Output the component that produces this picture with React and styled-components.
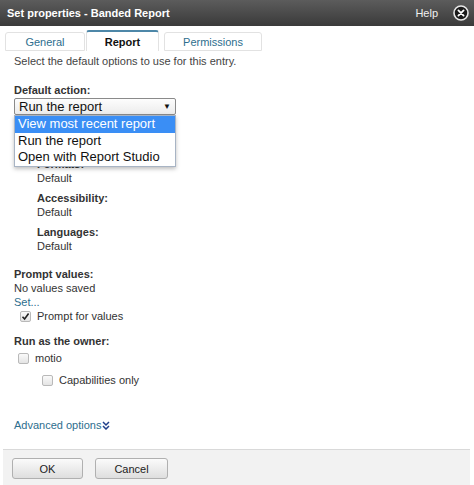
import React from "react";
import styled, { createGlobalStyle } from "styled-components";

const Global = createGlobalStyle`
  html, body { margin: 0; padding: 0; background: #fff; }
  body { font-family: "Liberation Sans", Arial, sans-serif; }
`;

const Dialog = styled.div`
  width: 474px;
  height: 485px;
  display: flex;
  flex-direction: column;
  overflow: hidden;
  background: #fff;
  position: relative;
`;

const TitleBar = styled.div`
  height: 26px;
  flex: none;
  display: flex;
  align-items: center;
  padding: 0 5px 0 7px;
  background: linear-gradient(#5c5c5c, #3a3a3a);
  color: #fff;
`;

const Title = styled.div`
  flex: 1;
  font-size: 11px;
  font-weight: bold;
`;

const Help = styled.span`
  font-size: 11px;
  margin-right: 15px;
  color: #f0f0f0;
`;

const TabBar = styled.div`
  display: flex;
  align-items: flex-end;
  padding: 4px 0 0 5px;
  height: 21px;
  flex: none;
`;

const Tab = styled.div`
  height: ${(p) => (p.$active ? "21px" : "19px")};
  width: ${(p) => p.$w}px;
  margin-right: ${(p) => p.$mr || 0}px;
  box-sizing: border-box;
  display: flex;
  align-items: center;
  justify-content: center;
  font-size: 11px;
  color: ${(p) => (p.$active ? "#111" : "#2d6e8e")};
  font-weight: ${(p) => (p.$active ? "bold" : "normal")};
  border: 1px solid #e2e2e2;
  border-top: ${(p) => (p.$active ? "2px solid #4d87a8" : "1px solid #e2e2e2")};
  border-bottom: ${(p) => (p.$active ? "none" : "1px solid #e2e2e2")};
  border-radius: 3px 3px 0 0;
  background: #fff;
`;

const Content = styled.div`
  flex: 1;
  padding: 3px 14px 0 14px;
  color: #333;
  font-size: 11px;
  position: relative;
`;

const Intro = styled.div`
  color: #444;
  font-size: 11px;
  line-height: 14px;
  margin-bottom: 15px;
`;

const Label = styled.div`
  font-weight: bold;
  font-size: 11px;
  line-height: 14px;
  color: #333;
`;

const Value = styled.div`
  font-size: 11px;
  line-height: 14px;
  color: #333;
`;

const Link = styled.a`
  display: inline-flex;
  align-items: center;
  font-size: 11px;
  line-height: 14px;
  color: #2d6e8e;
  text-decoration: none;
`;

const SelectWrap = styled.div`
  position: relative;
  width: 162px;
  margin-top: 1px;
`;

const Select = styled.div`
  height: 17px;
  box-sizing: border-box;
  border: 1px solid #8a8a8a;
  border-radius: 2px;
  background: linear-gradient(#fdfdfd, #ececec);
  display: flex;
  align-items: center;
  justify-content: space-between;
  padding: 0 4px 0 4px;
  font-size: 13px;
  color: #111;
`;

const Arrow = styled.span`
  font-size: 8px;
  color: #111;
`;

const Menu = styled.div`
  position: absolute;
  left: 0;
  top: 17px;
  width: 162px;
  box-sizing: border-box;
  background: #fff;
  border: 1px solid #a8b4c4;
  box-shadow: 0 2px 4px rgba(0, 0, 0, 0.25);
  z-index: 2;
`;

const Option = styled.div`
  height: 16.5px;
  line-height: 16px;
  padding-left: 3px;
  font-size: 13px;
  color: ${(p) => (p.$sel ? "#fff" : "#111")};
  background: ${(p) => (p.$sel ? "#3a8ef5" : "transparent")};
`;

const Indented = styled.div`
  padding-left: 23px;
  margin-top: 42px;
  display: flex;
  flex-direction: column;
  gap: 6px;
`;

const Section = styled.div`
  margin-top: ${(p) => p.$mt || 0}px;
`;

const CheckRow = styled.label`
  display: flex;
  align-items: center;
  gap: 6px;
  margin-left: ${(p) => p.$ml || 0}px;
  margin-top: ${(p) => p.$mt || 0}px;
  font-size: 11px;
  line-height: 13px;
  color: #333;
`;

const Box = styled.span`
  width: 11px;
  height: 11px;
  box-sizing: border-box;
  border: 1px solid #b9b9b9;
  border-radius: 2px;
  background: linear-gradient(#fafafa, #e4e4e4);
  display: flex;
  align-items: center;
  justify-content: center;
`;

const Footer = styled.div`
  height: 36px;
  flex: none;
  margin: 0 4px 0 3px;
  border-top: 1px solid #d9d9d9;
  background: #f2f2f2;
  display: flex;
  gap: 12px;
  padding: 8px 0 0 9px;
  box-sizing: border-box;
`;

const Button = styled.button`
  width: ${(p) => p.$w}px;
  height: 21px;
  border: 1px solid #b0b0b0;
  border-radius: 3px;
  background: linear-gradient(#fbfbfb, #dedede);
  font-family: "Liberation Sans", Arial, sans-serif;
  font-size: 11px;
  color: #222;
  padding: 0;
`;

const CloseIcon = () => (
  <svg width="16" height="16" viewBox="0 0 16 16">
    <circle cx="8" cy="8" r="7" fill="#1a1a1a" stroke="#e8e8e8" strokeWidth="1.6" />
    <path d="M5.4 5.4 L10.6 10.6 M10.6 5.4 L5.4 10.6" stroke="#fff" strokeWidth="1.8" strokeLinecap="round" />
  </svg>
);

const Check = () => (
  <svg width="9" height="9" viewBox="0 0 9 9">
    <path d="M1.5 4.8 L3.6 7 L7.6 1.6" fill="none" stroke="#222" strokeWidth="1.6" />
  </svg>
);

const Chevrons = () => (
  <svg width="8" height="9" viewBox="0 0 8 9" style={{ marginLeft: 1 }}>
    <path d="M1 1 L4 4 L7 1 M1 5 L4 8 L7 5" fill="none" stroke="#1f3f8a" strokeWidth="1.5" />
  </svg>
);

export default function App() {
  return (
    <>
      <Global />
      <Dialog>
        <TitleBar>
          <Title>Set properties - Banded Report</Title>
          <Help>Help</Help>
          <CloseIcon />
        </TitleBar>
        <TabBar>
          <Tab $w={80} $mr={1}>General</Tab>
          <Tab $w={73} $mr={5} $active>Report</Tab>
          <Tab $w={98}>Permissions</Tab>
        </TabBar>
        <Content>
          <Intro>Select the default options to use for this entry.</Intro>
          <Label>Default action:</Label>
          <SelectWrap>
            <Select>
              <span>Run the report</span>
              <Arrow>▼</Arrow>
            </Select>
            <Menu>
              <Option $sel>View most recent report</Option>
              <Option>Run the report</Option>
              <Option>Open with Report Studio</Option>
            </Menu>
          </SelectWrap>
          <Indented>
            <div>
              <Label>Formats:</Label>
              <Value>Default</Value>
            </div>
            <div>
              <Label>Accessibility:</Label>
              <Value>Default</Value>
            </div>
            <div>
              <Label>Languages:</Label>
              <Value>Default</Value>
            </div>
          </Indented>
          <Section $mt={14}>
            <Label>Prompt values:</Label>
            <Value>No values saved</Value>
            <Link href="#">Set...</Link>
          </Section>
          <CheckRow $ml={6} $mt={1}>
            <Box><Check /></Box>
            Prompt for values
          </CheckRow>
          <Section $mt={11}>
            <Label>Run as the owner:</Label>
          </Section>
          <CheckRow $ml={4} $mt={4}>
            <Box />
            motio
          </CheckRow>
          <CheckRow $ml={28} $mt={9}>
            <Box />
            Capabilities only
          </CheckRow>
          <Section $mt={31}>
            <Link href="#">Advanced options<Chevrons /></Link>
          </Section>
        </Content>
        <Footer>
          <Button $w={71}>OK</Button>
          <Button $w={73}>Cancel</Button>
        </Footer>
      </Dialog>
    </>
  );
}
